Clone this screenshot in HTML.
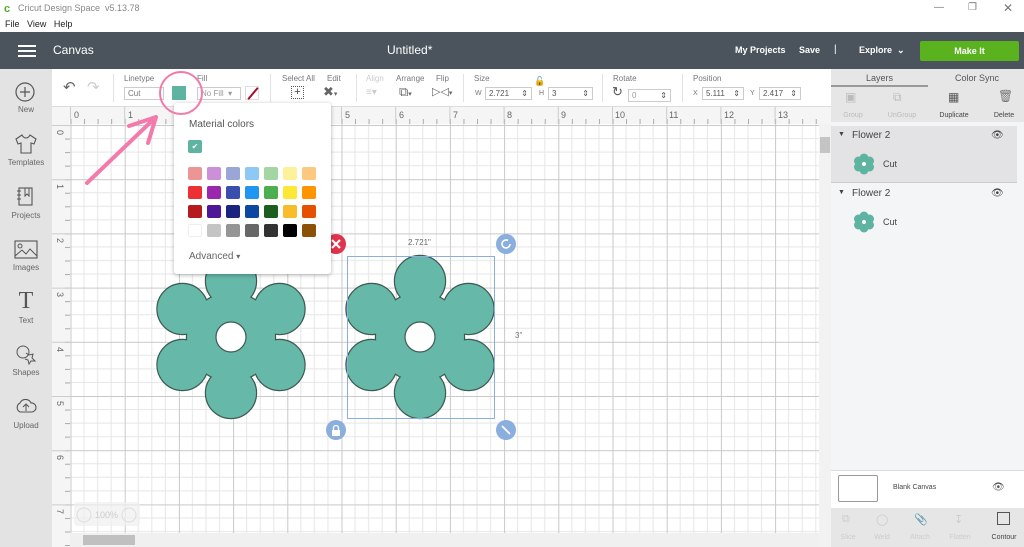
<!DOCTYPE html>
<html><head><meta charset="utf-8"><style>
*{box-sizing:border-box;margin:0;padding:0}
body{width:1024px;height:547px;overflow:hidden;position:relative;background:#fff;font-family:"Liberation Sans",sans-serif;color:#333}
.a{position:absolute}
.lbl{font-size:8px;color:#777}
.inp{position:absolute;height:13px;border:1px solid #ccc;background:#fff;font-size:8px;color:#555;padding-left:3px;line-height:11px}
.side{font-size:8px;color:#666;text-align:center;width:52px;left:0}
.sw{position:absolute;width:14px;height:13px;border-radius:2px}
.pt{font-size:7px;color:#444;text-align:center}
</style></head><body>
<div class="a" style="left:0;top:0;width:1024px;height:32px;background:#fff"></div>
<div class="a" style="left:4px;top:3px;font-size:11px;color:#5aaa2a;font-weight:bold">c</div>
<div class="a" style="left:18px;top:3px;font-size:9px;color:#888">Cricut Design Space&nbsp; v5.13.78</div>
<div class="a" style="left:5px;top:19px;font-size:9px;color:#222">File&nbsp;&nbsp; View&nbsp;&nbsp; Help</div>
<div class="a" style="left:934px;top:2px;font-size:10px;color:#777">&#8212;</div>
<div class="a" style="left:968px;top:2px;font-size:10px;color:#777">&#10064;</div>
<div class="a" style="left:1003px;top:1px;font-size:12px;color:#777">&#10005;</div>
<div class="a" style="left:0;top:32px;width:1024px;height:37px;background:#4b545c"></div>
<div class="a" style="left:18px;top:45px;width:18px;height:2px;background:#fff;box-shadow:0 5px 0 #fff,0 10px 0 #fff"></div>
<div class="a" style="left:53px;top:43px;font-size:12px;color:#fff">Canvas</div>
<div class="a" style="left:387px;top:43px;font-size:12px;color:#fff">Untitled*</div>
<div class="a" style="left:735px;top:45px;font-size:9px;color:#fff;font-weight:bold">My Projects</div>
<div class="a" style="left:799px;top:45px;font-size:9px;color:#fff;font-weight:bold">Save</div>
<div class="a" style="left:834px;top:44px;font-size:10px;color:#fff">|</div>
<div class="a" style="left:859px;top:45px;font-size:9px;color:#fff;font-weight:bold">Explore &nbsp;&#8964;</div>
<div class="a" style="left:920px;top:41px;width:99px;height:20px;background:#5ab31e;border-radius:2px;color:#fff;font-size:9px;font-weight:bold;text-align:center;line-height:20px">Make It</div>
<div class="a" style="left:0;top:69px;width:52px;height:478px;background:#e3e3e4"></div>
<svg class="a" style="left:14px;top:81px" width="22" height="22"><circle cx="11" cy="11" r="9" fill="none" stroke="#555" stroke-width="1.2"/><path d="M11 6v10M6 11h10" stroke="#555" stroke-width="1.2"/></svg>
<div class="a side" style="top:105px">New</div>
<svg class="a" style="left:14px;top:133px" width="24" height="22"><path d="M8 2l-6 4 2 5 3-1v10h10V10l3 1 2-5-6-4c-1 2-2 3-4 3s-3-1-4-3z" fill="none" stroke="#555" stroke-width="1.1"/></svg>
<div class="a side" style="top:158px">Templates</div>
<svg class="a" style="left:15px;top:186px" width="22" height="22"><rect x="4" y="2" width="13" height="17" fill="none" stroke="#555" stroke-width="1.1"/><path d="M2 5h4M2 9h4M2 13h4M10 2v8l2-2 2 2V2" fill="none" stroke="#555"/></svg>
<div class="a side" style="top:211px">Projects</div>
<svg class="a" style="left:14px;top:239px" width="24" height="22"><rect x="1" y="2" width="22" height="17" fill="none" stroke="#555" stroke-width="1.1"/><circle cx="6" cy="7" r="2" fill="none" stroke="#555"/><path d="M1 17l7-6 4 4 4-5 7 7" fill="none" stroke="#555"/></svg>
<div class="a side" style="top:263px">Images</div>
<div class="a" style="left:14px;top:288px;font-family:'Liberation Serif',serif;font-size:24px;color:#555;width:24px;text-align:center">T</div>
<div class="a side" style="top:316px">Text</div>
<svg class="a" style="left:14px;top:343px" width="24" height="22"><circle cx="9" cy="9" r="6" fill="none" stroke="#555"/><path d="M12 10l3 2 4-1-1 4 3 3-4 0-2 3-1-4-3-1" fill="none" stroke="#555"/></svg>
<div class="a side" style="top:368px">Shapes</div>
<svg class="a" style="left:14px;top:396px" width="24" height="22"><path d="M6 16a5 5 0 0 1 0-9 6 6 0 0 1 11 0 4.5 4.5 0 0 1 1 9z" fill="none" stroke="#555" stroke-width="1.1"/><path d="M12 15V9M9 11l3-3 3 3" fill="none" stroke="#555"/></svg>
<div class="a side" style="top:421px">Upload</div>
<div class="a" style="left:52px;top:69px;width:779px;height:38px;background:#fff;border-bottom:1px solid #ddd"></div>
<div class="a" style="left:63px;top:78px;font-size:15px;color:#666">&#8630;</div>
<div class="a" style="left:87px;top:78px;font-size:15px;color:#ccc">&#8631;</div>
<div class="a" style="left:113px;top:74px;width:1px;height:28px;background:#e3e3e3"></div>
<div class="a lbl" style="left:124px;top:74px">Linetype</div>
<div class="inp" style="left:124px;top:87px;width:40px;color:#777">Cut</div>
<div class="a" style="left:172px;top:86px;width:14px;height:14px;background:#5fb3a1"></div>
<div class="a lbl" style="left:197px;top:74px">Fill</div>
<div class="inp" style="left:197px;top:87px;width:44px;color:#999">No Fill &nbsp;&#9662;</div>
<div class="a" style="left:245px;top:86px;width:14px;height:14px;border:1px solid #ddd"><div style="position:absolute;left:6px;top:-1px;width:2px;height:15px;background:#a3102c;transform:rotate(40deg)"></div></div>
<div class="a" style="left:270px;top:74px;width:1px;height:28px;background:#e3e3e3"></div>
<div class="a lbl" style="left:282px;top:74px">Select All</div>
<div class="a" style="left:291px;top:86px;width:13px;height:13px;border:1px dotted #555;font-size:11px;line-height:10px;text-align:center;color:#444">+</div>
<div class="a lbl" style="left:327px;top:74px">Edit</div>
<div class="a" style="left:323px;top:84px;font-size:13px;color:#666">&#10006;<span style="font-size:7px">&#9662;</span></div>
<div class="a" style="left:356px;top:74px;width:1px;height:28px;background:#e3e3e3"></div>
<div class="a lbl" style="left:366px;top:74px;color:#ccc">Align</div>
<div class="a" style="left:366px;top:87px;font-size:10px;color:#ccc">&#8801;&#9662;</div>
<div class="a lbl" style="left:396px;top:74px">Arrange</div>
<div class="a" style="left:399px;top:84px;font-size:13px;color:#666">&#10697;<span style="font-size:7px">&#9662;</span></div>
<div class="a lbl" style="left:436px;top:74px">Flip</div>
<div class="a" style="left:432px;top:85px;font-size:11px;color:#666">&#9655;&#9665;<span style="font-size:7px">&#9662;</span></div>
<div class="a" style="left:463px;top:74px;width:1px;height:28px;background:#e3e3e3"></div>
<div class="a lbl" style="left:474px;top:74px">Size</div>
<div class="a lbl" style="left:475px;top:90px;font-size:7px">W</div>
<div class="inp" style="left:485px;top:87px;width:47px">2.721 <span style="float:right;margin-right:3px">&#8661;</span></div>
<div class="a" style="left:534px;top:76px;font-size:9px;color:#777">&#128275;</div>
<div class="a lbl" style="left:539px;top:90px;font-size:7px">H</div>
<div class="inp" style="left:548px;top:87px;width:45px">3 <span style="float:right;margin-right:3px">&#8661;</span></div>
<div class="a" style="left:602px;top:74px;width:1px;height:28px;background:#e3e3e3"></div>
<div class="a lbl" style="left:613px;top:74px">Rotate</div>
<div class="a" style="left:612px;top:84px;font-size:13px;color:#555">&#8635;</div>
<div class="inp" style="left:628px;top:89px;width:43px;color:#999">0 <span style="float:right;margin-right:3px;color:#555">&#8661;</span></div>
<div class="a" style="left:682px;top:74px;width:1px;height:28px;background:#e3e3e3"></div>
<div class="a lbl" style="left:693px;top:74px">Position</div>
<div class="a lbl" style="left:693px;top:90px;font-size:7px">X</div>
<div class="inp" style="left:702px;top:87px;width:42px">5.111 <span style="float:right;margin-right:3px">&#8661;</span></div>
<div class="a lbl" style="left:750px;top:90px;font-size:7px">Y</div>
<div class="inp" style="left:759px;top:87px;width:42px">2.417 <span style="float:right;margin-right:3px">&#8661;</span></div>
<svg class="a" style="left:52px;top:107px" width="779" height="440">
<defs>
<pattern id="g" x="18.5" y="18" width="54.2" height="54.2" patternUnits="userSpaceOnUse">
<path d="M13.55 0V54.2M27.1 0V54.2M40.65 0V54.2M0 13.55H54.2M0 27.1H54.2M0 40.65H54.2" stroke="#e6e6e6" stroke-width="1"/>
<path d="M0.5 0V54.2M0 0.5H54.2" stroke="#c9c9c9" stroke-width="1"/>
</pattern>
<pattern id="rt" x="18.5" y="0" width="13.55" height="17" patternUnits="userSpaceOnUse"><path d="M0.5 12V17" stroke="#aaa"/></pattern>
<pattern id="rl" x="0" y="18" width="18" height="13.55" patternUnits="userSpaceOnUse"><path d="M13 0.5H18" stroke="#aaa"/></pattern>
</defs>
<rect x="18" y="17" width="749" height="423" fill="#fff"/>
<rect x="18" y="17" width="749" height="423" fill="url(#g)"/>
<rect x="0" y="0" width="779" height="17" fill="#f5f5f5"/>
<rect x="18" y="0" width="749" height="17" fill="url(#rt)"/>
<rect x="0" y="17" width="18" height="423" fill="#f5f5f5"/>
<rect x="0" y="17" width="18" height="423" fill="url(#rl)"/>
<g stroke="#ccc"><path d="M18.5 0V17M72.7 0V17M126.9 0V17M181.1 0V17M235.3 0V17M289.5 0V17M343.7 0V17M397.9 0V17M452.1 0V17M506.3 0V17M560.5 0V17M614.7 0V17M668.9 0V17M723.1 0V17"/>
<path d="M0 18.5H18M0 72.7H18M0 126.9H18M0 181.1H18M0 235.3H18M0 289.5H18M0 343.7H18M0 397.9H18"/></g>
<g font-size="9" fill="#666" font-family="Liberation Sans">
<text x="22" y="11">0</text><text x="76" y="11">1</text><text x="130" y="11">2</text><text x="184" y="11">3</text><text x="239" y="11">4</text><text x="293" y="11">5</text><text x="347" y="11">6</text><text x="401" y="11">7</text><text x="455" y="11">8</text><text x="509" y="11">9</text><text x="563" y="11">10</text><text x="617" y="11">11</text><text x="672" y="11">12</text><text x="726" y="11">13</text>
</g>
<g font-size="9" fill="#666" font-family="Liberation Sans">
<text transform="translate(5,23) rotate(90)">0</text><text transform="translate(5,77) rotate(90)">1</text><text transform="translate(5,131) rotate(90)">2</text><text transform="translate(5,185) rotate(90)">3</text><text transform="translate(5,240) rotate(90)">4</text><text transform="translate(5,294) rotate(90)">5</text><text transform="translate(5,348) rotate(90)">6</text><text transform="translate(5,402) rotate(90)">7</text>
</g>
<rect x="767" y="17" width="12" height="423" fill="#f2f2f2"/>
<rect x="768" y="30" width="10" height="16" fill="#c4c4c4"/>
<rect x="18" y="426" width="749" height="14" fill="#f0f0f0"/>
<rect x="31" y="428" width="52" height="10" fill="#c0c0c0"/>
<rect x="22" y="395" width="66" height="24" rx="3" fill="#f0f0f0" opacity="0.7"/>
<text x="43" y="411" font-size="9" fill="#ccc">100%</text>
<circle cx="32" cy="408" r="7" fill="none" stroke="#ddd"/><circle cx="77" cy="408" r="7" fill="none" stroke="#ddd"/>
</svg>
<svg class="a" style="left:0;top:0" width="831" height="547">
<defs>
<g id="fl">
<circle cx="0" cy="0" r="44"/>
<circle cx="0" cy="-56" r="25"/><circle cx="48.5" cy="-28" r="25"/><circle cx="48.5" cy="28" r="25"/>
<circle cx="0" cy="56" r="25"/><circle cx="-48.5" cy="28" r="25"/><circle cx="-48.5" cy="-28" r="25"/>
</g>
</defs>
<g transform="translate(231,337)"><use href="#fl" fill="#3d5a52" stroke="#3d5a52" stroke-width="2.4"/><use href="#fl" fill="#66b8a8"/><circle r="15" fill="#fff" stroke="#3d5a52" stroke-width="1.2"/></g>
<g transform="translate(420,337)"><use href="#fl" fill="#3d5a52" stroke="#3d5a52" stroke-width="2.4"/><use href="#fl" fill="#66b8a8"/><circle r="15" fill="#fff" stroke="#3d5a52" stroke-width="1.2"/></g>
<rect x="347.5" y="256.5" width="147" height="162" fill="none" stroke="#8aaede" stroke-width="1"/>
<text x="408" y="245" font-size="8" fill="#666">2.721"</text>
<text x="515" y="338" font-size="8" fill="#777">3"</text>
<circle cx="336" cy="244" r="10" fill="#e0334d"/><path d="M332 240l8 8M340 240l-8 8" stroke="#fff" stroke-width="2.2"/>
<circle cx="506" cy="244" r="10" fill="#8aaede"/><path d="M510 244a4 4 0 1 1-2-3.5" fill="none" stroke="#fff" stroke-width="1.6"/>
<circle cx="336" cy="430" r="10" fill="#8aaede"/><rect x="332" y="430" width="8" height="6" fill="#fff"/><path d="M333.5 430v-2a2.5 2.5 0 0 1 5 0v2" fill="none" stroke="#fff" stroke-width="1.3"/>
<circle cx="506" cy="430" r="10" fill="#8aaede"/><path d="M502 426l8 8" stroke="#fff" stroke-width="1.8"/>
</svg>
<div class="a" style="left:174px;top:103px;width:157px;height:171px;background:#fff;border-radius:3px;box-shadow:0 1px 4px rgba(0,0,0,.3)"></div>
<div class="a" style="left:189px;top:119px;font-size:10px;color:#555">Material colors</div>
<div class="sw" style="left:188px;top:140px;background:#5fb3a1;color:#fff;font-size:8px;text-align:center;line-height:13px">&#10004;</div>
<div class="sw" style="left:188px;top:167px;background:#eb9595"></div><div class="sw" style="left:207px;top:167px;background:#cc90d8"></div><div class="sw" style="left:226px;top:167px;background:#9aa6d8"></div><div class="sw" style="left:245px;top:167px;background:#8ec8f4"></div><div class="sw" style="left:264px;top:167px;background:#a4d6a4"></div><div class="sw" style="left:283px;top:167px;background:#fdf29a"></div><div class="sw" style="left:302px;top:167px;background:#fdc980"></div>
<div class="sw" style="left:188px;top:186px;background:#ec3033"></div><div class="sw" style="left:207px;top:186px;background:#9b27ae"></div><div class="sw" style="left:226px;top:186px;background:#3a4ead"></div><div class="sw" style="left:245px;top:186px;background:#2196f1"></div><div class="sw" style="left:264px;top:186px;background:#4caf4f"></div><div class="sw" style="left:283px;top:186px;background:#fde935"></div><div class="sw" style="left:302px;top:186px;background:#fd9400"></div>
<div class="sw" style="left:188px;top:205px;background:#b51b1e"></div><div class="sw" style="left:207px;top:205px;background:#4e1797"></div><div class="sw" style="left:226px;top:205px;background:#1c257e"></div><div class="sw" style="left:245px;top:205px;background:#0d48a0"></div><div class="sw" style="left:264px;top:205px;background:#1b5e20"></div><div class="sw" style="left:283px;top:205px;background:#f9bd2c"></div><div class="sw" style="left:302px;top:205px;background:#e55100"></div>
<div class="sw" style="left:188px;top:224px;background:#fff;border:1px solid #eee"></div><div class="sw" style="left:207px;top:224px;background:#c4c4c4"></div><div class="sw" style="left:226px;top:224px;background:#959595"></div><div class="sw" style="left:245px;top:224px;background:#676767"></div><div class="sw" style="left:264px;top:224px;background:#323232"></div><div class="sw" style="left:283px;top:224px;background:#000"></div><div class="sw" style="left:302px;top:224px;background:#8b5107"></div>
<div class="a" style="left:189px;top:251px;font-size:10px;color:#666">Advanced <span style="font-size:8px">&#9662;</span></div>
<svg class="a" style="left:0;top:0" width="300" height="200">
<circle cx="181" cy="93" r="21" fill="none" stroke="#f27aa8" stroke-width="2"/>
<path d="M87 183L156 117M129 126L156 117L148 143" fill="none" stroke="#f47aac" stroke-width="4" stroke-linecap="round" stroke-linejoin="round"/>
</svg>
<div class="a" style="left:831px;top:69px;width:193px;height:478px;background:#f4f5f7"></div>
<div class="a" style="left:831px;top:69px;width:193px;height:53px;background:#e6e6e6"></div>
<div class="a" style="left:866px;top:73px;font-size:9px;color:#555">Layers</div>
<div class="a" style="left:955px;top:73px;font-size:9px;color:#555">Color Sync</div>
<div class="a" style="left:831px;top:85px;width:97px;height:2px;background:#999"></div>
<div class="a" style="left:845px;top:90px;font-size:12px;color:#bbb">&#9635;</div>
<div class="a" style="left:893px;top:90px;font-size:12px;color:#bbb">&#10697;</div>
<div class="a" style="left:948px;top:90px;font-size:12px;color:#555">&#9638;</div>
<div class="a" style="left:998px;top:89px;font-size:12px;color:#777">&#128465;</div>
<div class="a pt" style="left:838px;top:112px;width:30px;color:#bbb">Group</div>
<div class="a pt" style="left:884px;top:112px;width:36px;color:#bbb">UnGroup</div>
<div class="a pt" style="left:934px;top:112px;width:40px">Duplicate</div>
<div class="a pt" style="left:988px;top:112px;width:32px">Delete</div>
<div class="a" style="left:831px;top:126px;width:186px;height:57px;background:#e3e3e5;border-bottom:1px solid #ccc"></div>
<div class="a" style="left:838px;top:131px;font-size:7px;color:#444">&#9660;</div>
<div class="a" style="left:852px;top:130px;font-size:10px;color:#444">Flower 2</div>
<div class="a" style="left:991px;top:130px;font-size:10px;color:#444">&#128065;</div>
<svg class="a" style="left:853px;top:153px" width="22" height="22"><g fill="#5fb3a1"><circle cx="11" cy="5" r="4.5"/><circle cx="16.5" cy="8" r="4.5"/><circle cx="16.5" cy="14" r="4.5"/><circle cx="11" cy="17" r="4.5"/><circle cx="5.5" cy="14" r="4.5"/><circle cx="5.5" cy="8" r="4.5"/><circle cx="11" cy="11" r="6"/></g><circle cx="11" cy="11" r="2" fill="#fff"/></svg>
<div class="a" style="left:883px;top:159px;font-size:9px;color:#444">Cut</div>
<div class="a" style="left:838px;top:189px;font-size:7px;color:#444">&#9660;</div>
<div class="a" style="left:852px;top:188px;font-size:10px;color:#444">Flower 2</div>
<div class="a" style="left:991px;top:188px;font-size:10px;color:#444">&#128065;</div>
<svg class="a" style="left:853px;top:211px" width="22" height="22"><g fill="#5fb3a1"><circle cx="11" cy="5" r="4.5"/><circle cx="16.5" cy="8" r="4.5"/><circle cx="16.5" cy="14" r="4.5"/><circle cx="11" cy="17" r="4.5"/><circle cx="5.5" cy="14" r="4.5"/><circle cx="5.5" cy="8" r="4.5"/><circle cx="11" cy="11" r="6"/></g><circle cx="11" cy="11" r="2" fill="#fff"/></svg>
<div class="a" style="left:883px;top:217px;font-size:9px;color:#444">Cut</div>
<div class="a" style="left:831px;top:470px;width:193px;height:38px;background:#fff;border-top:1px solid #ddd"></div>
<div class="a" style="left:838px;top:475px;width:40px;height:27px;border:1px solid #999;border-radius:2px;background:#fff"></div>
<div class="a" style="left:893px;top:484px;font-size:7px;color:#444">Blank Canvas</div>
<div class="a" style="left:992px;top:482px;font-size:10px;color:#555">&#128065;</div>
<div class="a" style="left:831px;top:508px;width:193px;height:39px;background:#e6e6e6"></div>
<div class="a" style="left:842px;top:513px;font-size:11px;color:#ccc">&#10697;</div>
<div class="a" style="left:876px;top:513px;font-size:11px;color:#ccc">&#9711;</div>
<div class="a" style="left:914px;top:513px;font-size:11px;color:#ccc">&#128206;</div>
<div class="a" style="left:954px;top:513px;font-size:11px;color:#ccc">&#8615;</div>
<div class="a" style="left:997px;top:512px;width:13px;height:13px;border:1px solid #555"></div>
<div class="a pt" style="left:836px;top:534px;width:24px;color:#ccc">Slice</div>
<div class="a pt" style="left:870px;top:534px;width:24px;color:#ccc">Weld</div>
<div class="a pt" style="left:905px;top:534px;width:30px;color:#ccc">Attach</div>
<div class="a pt" style="left:945px;top:534px;width:30px;color:#ccc">Flatten</div>
<div class="a pt" style="left:988px;top:534px;width:32px">Contour</div>
</body></html>
